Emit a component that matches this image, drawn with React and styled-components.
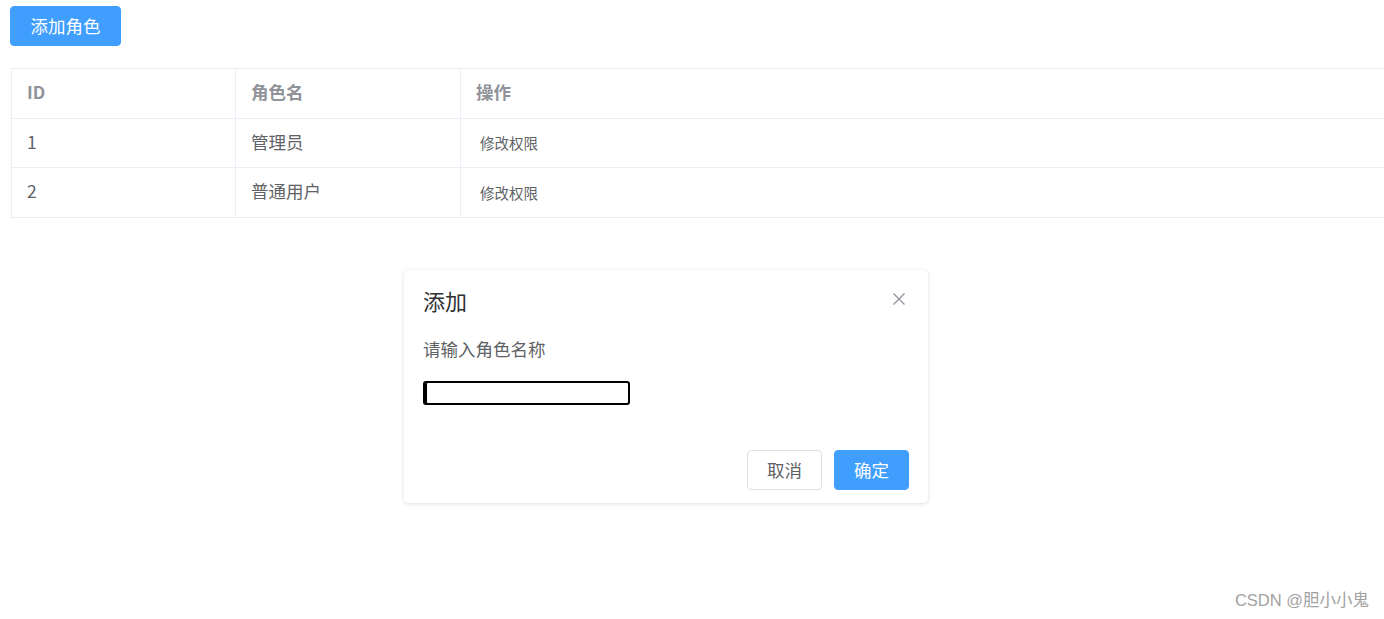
import React from 'react'
import styled, { createGlobalStyle } from 'styled-components'

const GlobalStyle = createGlobalStyle`
  html, body {
    margin: 0;
    padding: 0;
    background: #fff;
    overflow: hidden;
  }
  body {
    font-family: "Noto Sans CJK SC", "Noto Sans", "Liberation Sans", sans-serif;
    color: #606266;
  }
`

const roles = [
  { id: 1, name: '管理员' },
  { id: 2, name: '普通用户' }
]

const Page = styled.div`
  position: relative;
  width: 1384px;
  height: 619px;
  padding: 6px 0 0 11px;
  box-sizing: border-box;
`

const Button = styled.button`
  display: block;
  height: 40px;
  padding: 0;
  border-radius: 4px;
  font-family: inherit;
  font-size: 17.5px;
  line-height: 1;
  white-space: nowrap;
  cursor: pointer;
  border: 1px solid ${p => (p.primary ? '#409eff' : '#dcdfe6')};
  background: ${p => (p.primary ? '#409eff' : '#fff')};
  color: ${p => (p.primary ? '#fff' : '#606266')};
`

const AddButton = styled(Button)`
  margin-left: -1px;
  width: 111px;
`

const Table = styled.div`
  margin-top: 22px;
  width: 1390px;
  border-top: 1px solid #ebeef5;
  border-left: 1px solid #ebeef5;
`

const Row = styled.div`
  display: grid;
  grid-template-columns: 224px 225px 1fr;
  height: 49.5px;
  box-sizing: border-box;
  border-bottom: 1px solid #ebeef5;
`

const Cell = styled.div`
  display: flex;
  align-items: center;
  padding: 0 0 3px 15px;
  border-right: 1px solid #ebeef5;
  font-size: 17.5px;
  font-weight: ${p => (p.head ? 700 : 400)};
  color: ${p => (p.head ? '#909399' : '#606266')};
`

const TextButton = styled.span`
  padding: 3px 4px 0;
  font-size: 14.5px;
  color: #606266;
`

const Dialog = styled.div`
  position: absolute;
  left: 404px;
  top: 270px;
  width: 524px;
  height: 233px;
  box-sizing: border-box;
  background: #fff;
  border-radius: 4px;
  box-shadow: 0 1px 4px rgba(0, 0, 0, 0.12), 0 0 1px rgba(0, 0, 0, 0.1);
  display: flex;
  flex-direction: column;
`

const DialogHeader = styled.div`
  display: flex;
  align-items: center;
  justify-content: space-between;
  padding: 16px 22px 0 19px;
  height: 28px;
`

const Title = styled.span`
  font-size: 22px;
  color: #303133;
`

const Close = styled.svg`
  width: 14px;
  height: 14px;
  margin-top: -2px;
`

const DialogBody = styled.div`
  padding: 23px 19px 0;
  flex: 1;
`

const Label = styled.div`
  font-size: 17.5px;
  color: #606266;
  line-height: 24px;
`

const Input = styled.div`
  margin-top: 20px;
  width: 207px;
  height: 24px;
  box-sizing: border-box;
  border: 2px solid #000;
  border-radius: 3px;
  box-shadow: inset 2px 0 0 #000;
`

const DialogFooter = styled.div`
  display: flex;
  justify-content: flex-end;
  gap: 12px;
  padding: 0 19px 13px;
`

const FooterButton = styled(Button)`
  width: 75px;
`

const Watermark = styled.div`
  position: absolute;
  right: 15px;
  bottom: 8px;
  font-family: "Liberation Sans", "Noto Sans CJK SC", sans-serif;
  font-size: 16.5px;
  color: #a2a2a2;
`

export default function App () {
  return (
    <Page>
      <GlobalStyle />
      <AddButton primary>添加角色</AddButton>
      <Table>
        <Row>
          <Cell head>ID</Cell>
          <Cell head>角色名</Cell>
          <Cell head>操作</Cell>
        </Row>
        {roles.map(r => (
          <Row key={r.id}>
            <Cell>{r.id}</Cell>
            <Cell>{r.name}</Cell>
            <Cell><TextButton>修改权限</TextButton></Cell>
          </Row>
        ))}
      </Table>
      <Dialog>
        <DialogHeader>
          <Title>添加</Title>
          <Close viewBox='0 0 14 14'>
            <path d='M1.5 1.5 L12.5 12.5 M12.5 1.5 L1.5 12.5' stroke='#909399' strokeWidth='1.3' fill='none' />
          </Close>
        </DialogHeader>
        <DialogBody>
          <Label>请输入角色名称</Label>
          <Input />
        </DialogBody>
        <DialogFooter>
          <FooterButton>取消</FooterButton>
          <FooterButton primary>确定</FooterButton>
        </DialogFooter>
      </Dialog>
      <Watermark>CSDN @胆小小鬼</Watermark>
    </Page>
  )
}
